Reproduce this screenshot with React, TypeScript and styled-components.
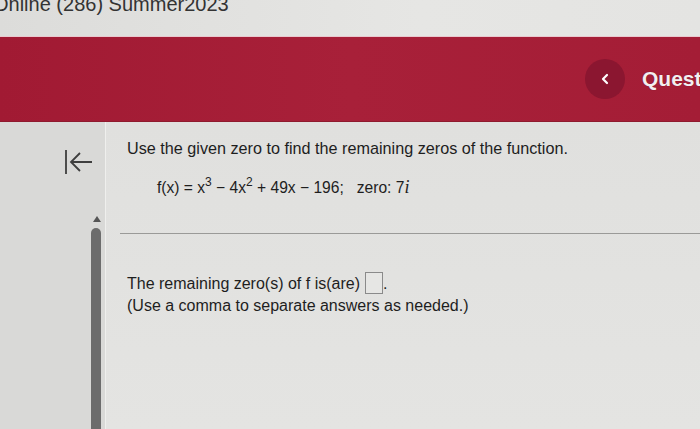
import styled, { createGlobalStyle } from "styled-components";

const GlobalStyle = createGlobalStyle`
  html, body {
    margin: 0;
    padding: 0;
    width: 700px;
    height: 429px;
    overflow: hidden;
    background: #e2e2e0;
    font-family: "Liberation Sans", Arial, sans-serif;
  }
`;

const Page = styled.div`
  width: 700px;
  height: 429px;
  display: flex;
  flex-direction: column;
  overflow: hidden;
`;

const TopBar = styled.div`
  height: 36px;
  background: linear-gradient(90deg, #dcdcda, #e6e6e4 60%, #e4e4e2);
  border-bottom: 1px solid #e9c9cf;
  overflow: hidden;
  flex-shrink: 0;
`;

const CourseTitle = styled.div`
  margin: -8px 0 0 -7px;
  font-size: 20px;
  line-height: 24px;
  color: #333;
  white-space: nowrap;
`;

const RedBar = styled.div`
  height: 84px;
  flex-shrink: 0;
  background: linear-gradient(90deg, #a11a33, #a82039 50%, #a41d36);
  display: flex;
  align-items: center;
  justify-content: flex-end;
  gap: 17px;
  border-bottom: 1px solid #8f1a2e;
`;

const BackCircle = styled.div`
  width: 40px;
  height: 40px;
  border-radius: 50%;
  background: #8b1630;
  display: flex;
  align-items: center;
  justify-content: center;
`;

const QuestLabel = styled.div`
  color: #f4eef0;
  font-weight: 700;
  font-size: 21px;
  width: 58px;
  white-space: nowrap;
  overflow: hidden;
  text-shadow: 0 0 1px rgba(0, 0, 0, 0.4);
`;

const Body = styled.div`
  flex: 1;
  display: flex;
  min-height: 0;
`;

const Sidebar = styled.div`
  width: 105px;
  flex-shrink: 0;
  background: #d9d9d7;
  border-right: 1px solid #efefed;
  display: flex;
`;

const IconColumn = styled.div`
  width: 90px;
  display: flex;
  justify-content: flex-end;
  align-items: flex-start;
  padding: 27px 0 0 0;
  box-sizing: border-box;
`;

const FirstPageIcon = styled.svg`
  margin-right: -3px;
`;

const ScrollColumn = styled.div`
  width: 11px;
  display: flex;
  flex-direction: column;
  align-items: center;
  padding-top: 94px;
`;

const ScrollArrow = styled.div`
  width: 0;
  height: 0;
  border-left: 4px solid transparent;
  border-right: 4px solid transparent;
  border-bottom: 6px solid #555;
  margin-left: 2px;
`;

const ScrollThumb = styled.div`
  margin-top: 6px;
  width: 10px;
  flex: 1;
  background: #6c6c6c;
  border-radius: 5px 5px 0 0;
`;

const Content = styled.div`
  flex: 1;
  padding: 17px 0 0 21px;
  color: #1e1e1e;
  background: linear-gradient(180deg, #e0e0de, #e4e4e2);
`;

const Prompt = styled.div`
  font-size: 16.2px;
  line-height: 18px;
`;

const Formula = styled.div`
  margin: 21px 0 0 30px;
  font-size: 15.6px;
  line-height: 18px;
`;

const Sup = styled.sup`
  font-size: 12px;
  line-height: 0;
  vertical-align: 7px;
`;

const Italic = styled.i`
  font-family: "Liberation Serif", "Times New Roman", serif;
  font-size: 18px;
`;

const Divider = styled.hr`
  margin: 36px 0 0 -7px;
  border: none;
  border-top: 1px solid #9a9a98;
  height: 0;
`;

const Answer = styled.div`
  margin-top: 38px;
  font-size: 16px;
  line-height: 22px;
`;

const AnswerBox = styled.span`
  display: inline-block;
  width: 16px;
  height: 20px;
  border: 1px solid #8a8a8a;
  vertical-align: -5px;
  margin-left: 5px;
  background: #e6e6e4;
`;

export default function App() {
  return (
    <>
      <GlobalStyle />
      <Page>
        <TopBar>
          <CourseTitle>Online (286) Summer2023</CourseTitle>
        </TopBar>
        <RedBar>
          <BackCircle>
            <svg width="10" height="12" viewBox="0 0 10 12">
              <path
                d="M7 2 L3 6 L7 10"
                fill="none"
                stroke="#fff"
                strokeWidth="2.2"
                strokeLinecap="round"
                strokeLinejoin="round"
              />
            </svg>
          </BackCircle>
          <QuestLabel>Question</QuestLabel>
        </RedBar>
        <Body>
          <Sidebar>
            <IconColumn>
              <FirstPageIcon width="29" height="26" viewBox="0 0 29 26">
                <path
                  d="M2 1 V25 M28 13 H7 M16 4 L7 13 L16 22"
                  fill="none"
                  stroke="#3e3e3e"
                  strokeWidth="1.8"
                />
              </FirstPageIcon>
            </IconColumn>
            <ScrollColumn>
              <ScrollArrow />
              <ScrollThumb />
            </ScrollColumn>
          </Sidebar>
          <Content>
            <Prompt>Use the given zero to find the remaining zeros of the function.</Prompt>
            <Formula>
              f(x) = x<Sup>3</Sup> − 4x<Sup>2</Sup> + 49x − 196;&nbsp;&nbsp; zero: 7
              <Italic>i</Italic>
            </Formula>
            <Divider />
            <Answer>
              The remaining zero(s) of f is(are)
              <AnswerBox />.
              <br />
              (Use a comma to separate answers as needed.)
            </Answer>
          </Content>
        </Body>
      </Page>
    </>
  );
}
